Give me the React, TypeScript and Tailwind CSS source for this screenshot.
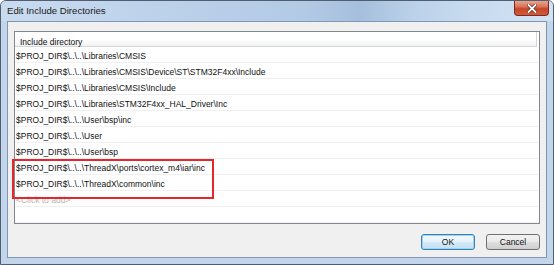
import React from "react";

const rows = [
  "$PROJ_DIR$\\..\\..\\Libraries\\CMSIS",
  "$PROJ_DIR$\\..\\..\\Libraries\\CMSIS\\Device\\ST\\STM32F4xx\\Include",
  "$PROJ_DIR$\\..\\..\\Libraries\\CMSIS\\Include",
  "$PROJ_DIR$\\..\\..\\Libraries\\STM32F4xx_HAL_Driver\\Inc",
  "$PROJ_DIR$\\..\\..\\User\\bsp\\inc",
  "$PROJ_DIR$\\..\\..\\User",
  "$PROJ_DIR$\\..\\..\\User\\bsp",
  "$PROJ_DIR$\\..\\..\\ThreadX\\ports\\cortex_m4\\iar\\inc",
  "$PROJ_DIR$\\..\\..\\ThreadX\\common\\inc",
];

export default function App() {
  return (
    <div
      className="relative w-[554px] h-[265px] flex flex-col bg-[#c2d5eb] border border-[#4f5e70] rounded-t-[6px] overflow-hidden"
      style={{ fontFamily: '"Liberation Sans", Arial, sans-serif' }}
    >
      {/* Title bar */}
      <div className="h-[20px] shrink-0 flex items-start justify-between pl-[6px] pr-[4px] bg-[linear-gradient(90deg,#c9dbef_0%,#bcd1ea_30%,#b3cae5_55%,#a5bfdc_65%,#bcd2ea_75%,#c8dbef_85%,#d2e2f3_100%)]">
        <span className="text-[9.6px] leading-[20px] text-[#1b1b1b]">Edit Include Directories</span>
        <div className="w-[35px] h-[15px] rounded-b-[4px] border border-t-0 border-[#7a2a1c] bg-[linear-gradient(180deg,#eaa48f_0%,#d8765a_40%,#c6452a_55%,#d25a3a_100%)] flex items-center justify-center">
          <svg width="10" height="9" viewBox="0 0 10 9">
            <path d="M1.5 1 L8.5 8 M8.5 1 L1.5 8" stroke="#5a2318" strokeWidth="3.2" strokeLinecap="square" />
            <path d="M1.5 1 L8.5 8 M8.5 1 L1.5 8" stroke="#ffffff" strokeWidth="1.8" strokeLinecap="square" />
          </svg>
        </div>
      </div>

      {/* Client area */}
      <div className="flex-1 mx-[6px] mb-[6px] bg-[#f0f0f0] border border-[#8397b2] flex flex-col pt-[9px] px-[6px]">
        <div className="h-[193px] bg-white border border-[#828790] flex flex-col text-[8.5px] text-[#111]">
          <div className="h-[15px] shrink-0 flex items-start pt-[5px] leading-[10px] pl-[5px] bg-[linear-gradient(180deg,#ffffff_0%,#ffffff_50%,#f1f2f4_100%)] border-b border-[#d5d5d5] mr-[2px] border-r">
            Include directory
          </div>
          {rows.map((r) => (
            <div key={r} className="h-[16px] shrink-0 flex items-start pt-[4px] leading-[10px] pl-[1px] border-b border-[#f0f0f0]">
              {r}
            </div>
          ))}
          <div className="h-[16px] shrink-0 flex items-start pt-[4px] leading-[10px] pl-[1px] border-b border-[#f0f0f0] text-[#b5b5b5]">
            &lt;Click to add&gt;
          </div>
          <div className="h-[16px] shrink-0 border-b border-[#f0f0f0]" />
        </div>
        <div className="flex justify-end gap-[11px] mt-[10px]">
          <button className="w-[54px] h-[16px] rounded-[3px] border border-[#3c7fb1] bg-[linear-gradient(180deg,#f2f9fd_0%,#e6f3fb_45%,#d3e9f7_55%,#c4e0f2_100%)] text-[8.5px] text-[#111] flex items-center justify-center shadow-[inset_0_0_0_1px_#9bd5f3]">
            OK
          </button>
          <button className="w-[54px] h-[16px] rounded-[3px] border border-[#707070] bg-[linear-gradient(180deg,#f2f2f2_0%,#ebebeb_45%,#dddddd_55%,#cfcfcf_100%)] text-[8.5px] text-[#111] flex items-center justify-center">
            Cancel
          </button>
        </div>
      </div>

      {/* Red highlight */}
      <div className="absolute left-[11px] top-[158px] w-[202px] h-[40px] border-2 border-[#e5262b]" />
    </div>
  );
}
